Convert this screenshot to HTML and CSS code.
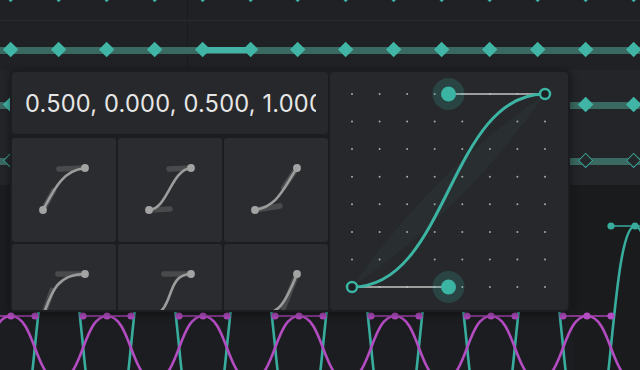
FILE: index.html
```html
<!DOCTYPE html>
<html>
<head>
<meta charset="utf-8">
<link rel="stylesheet" href="styles.css">
</head>
<body>
<div class="app">
  <div class="area area-top">
    <div class="row row-a">
      <div class="lane">
        <span class="slot"><i class="key"></i></span><span class="slot"><i class="key"></i></span><span class="slot"><i class="key"></i></span><span class="slot"><i class="key"></i></span><span class="slot"><i class="key"></i></span><span class="slot"><i class="key"></i></span><span class="slot"><i class="key"></i></span><span class="slot"><i class="key"></i></span><span class="slot"><i class="key"></i></span><span class="slot"><i class="key"></i></span><span class="slot"><i class="key"></i></span><span class="slot"><i class="key"></i></span><span class="slot"><i class="key"></i></span><span class="slot"><i class="key"></i></span><span class="slot"><i class="key"></i></span>
      </div>
    </div>
    <div class="row row-b">
      <div class="lane lane-track lane-active">
        <span class="slot"><i class="key"></i></span><span class="slot"><i class="key"></i></span><span class="slot"><i class="key"></i></span><span class="slot"><i class="key"></i></span><span class="slot"><i class="key"></i></span><span class="slot"><i class="key"></i></span><span class="slot"><i class="key"></i></span><span class="slot"><i class="key"></i></span><span class="slot"><i class="key"></i></span><span class="slot"><i class="key"></i></span><span class="slot"><i class="key"></i></span><span class="slot"><i class="key"></i></span><span class="slot"><i class="key"></i></span><span class="slot"><i class="key"></i></span><span class="slot"><i class="key"></i></span>
      </div>
    </div>
  </div>
  <div class="area area-mid">
    <div class="row row-c">
      <div class="lane lane-track">
        <span class="slot"><i class="key"></i></span><span class="slot"><i class="key"></i></span><span class="slot"><i class="key"></i></span><span class="slot"><i class="key"></i></span><span class="slot"><i class="key"></i></span><span class="slot"><i class="key"></i></span><span class="slot"><i class="key"></i></span><span class="slot"><i class="key"></i></span><span class="slot"><i class="key"></i></span><span class="slot"><i class="key"></i></span><span class="slot"><i class="key"></i></span><span class="slot"><i class="key"></i></span><span class="slot"><i class="key"></i></span><span class="slot"><i class="key"></i></span><span class="slot"><i class="key"></i></span>
      </div>
    </div>
    <div class="row row-d">
      <div class="lane lane-track">
        <span class="slot"><i class="key hollow"></i></span><span class="slot"><i class="key hollow"></i></span><span class="slot"><i class="key hollow"></i></span><span class="slot"><i class="key hollow"></i></span><span class="slot"><i class="key hollow"></i></span><span class="slot"><i class="key hollow"></i></span><span class="slot"><i class="key hollow"></i></span><span class="slot"><i class="key hollow"></i></span><span class="slot"><i class="key hollow"></i></span><span class="slot"><i class="key hollow"></i></span><span class="slot"><i class="key hollow"></i></span><span class="slot"><i class="key hollow"></i></span><span class="slot"><i class="key hollow"></i></span><span class="slot"><i class="key hollow"></i></span><span class="slot"><i class="key hollow"></i></span>
      </div>
    </div>
  </div>
  <div class="graph">
    <svg class="waves" width="640" height="185" viewBox="0 0 640 185">
      <path class="teal" d="M-85,281 C-61,281 -61,41 -37,41 S-13,281 11,281 S35,41 59,41 S83,281 107,281 S131,41 155,41 S179,281 203,281 S227,41 251,41 S275,281 299,281 S323,41 347,41 S371,281 395,281 S419,41 443,41 S467,281 491,281 S515,41 539,41 S563,281 587,281 S611,41 635,41 S659,281 683,281"/>
      <path class="magenta" d="M-85,131 C-61,131 -61,195 -37,195 S-13,131 11,131 S35,195 59,195 S83,131 107,131 S131,195 155,195 S179,131 203,131 S227,195 251,195 S275,131 299,131 S323,195 347,195 S371,131 395,131 S419,195 443,195 S467,131 491,131 S515,195 539,195 S563,131 587,131 S611,195 635,195 S659,131 683,131"/>
      <g class="mhandles">
        <line x1="-13" y1="131" x2="35" y2="131"/>
        <line x1="83" y1="131" x2="131" y2="131"/>
        <line x1="179" y1="131" x2="227" y2="131"/>
        <line x1="275" y1="131" x2="323" y2="131"/>
        <line x1="371" y1="131" x2="419" y2="131"/>
        <line x1="467" y1="131" x2="515" y2="131"/>
        <line x1="563" y1="131" x2="611" y2="131"/>
      </g>
      <g class="mdots">
        <circle cx="11" cy="131" r="3.6"/><circle cx="35" cy="131" r="3.6"/>
        <circle cx="83" cy="131" r="3.6"/><circle cx="107" cy="131" r="3.6"/><circle cx="131" cy="131" r="3.6"/>
        <circle cx="179" cy="131" r="3.6"/><circle cx="203" cy="131" r="3.6"/><circle cx="227" cy="131" r="3.6"/>
        <circle cx="275" cy="131" r="3.6"/><circle cx="299" cy="131" r="3.6"/><circle cx="323" cy="131" r="3.6"/>
        <circle cx="371" cy="131" r="3.6"/><circle cx="395" cy="131" r="3.6"/><circle cx="419" cy="131" r="3.6"/>
        <circle cx="467" cy="131" r="3.6"/><circle cx="491" cy="131" r="3.6"/><circle cx="515" cy="131" r="3.6"/>
        <circle cx="563" cy="131" r="3.6"/><circle cx="587" cy="131" r="3.6"/><circle cx="611" cy="131" r="3.6"/>
      </g>
      <g class="thandles">
        <line x1="611" y1="41" x2="659" y2="41"/>
      </g>
      <g class="tdots">
        <circle cx="611" cy="41" r="3.6"/><circle cx="635" cy="41" r="3.6"/>
      </g>
    </svg>
  </div>
</div>

<div class="popover">
  <div class="left-col">
    <div class="value-field"><div class="value-text">0.500, 0.000, 0.500, 1.000</div></div>
    <div class="presets">
      <div class="preset">
        <svg viewBox="0 0 104 104" width="104" height="104">
          <line class="h" x1="31" y1="72" x2="41.5" y2="52.7"/><line class="h" x1="73" y1="30" x2="47" y2="31"/>
          <path class="c" d="M31,72 C41.5,52.7 49.9,32.5 73,30"/>
          <circle class="p" cx="31" cy="72" r="3.9"/><circle class="p" cx="73" cy="30" r="3.9"/>
        </svg>
      </div>
      <div class="preset">
        <svg viewBox="0 0 104 104" width="104" height="104">
          <line class="h" x1="31" y1="72" x2="52" y2="71"/><line class="h" x1="73" y1="30" x2="51" y2="31"/>
          <path class="c" d="M31,72 C50.1,70.7 52.6,31.9 73,30"/>
          <circle class="p" cx="31" cy="72" r="3.9"/><circle class="p" cx="73" cy="30" r="3.9"/>
        </svg>
      </div>
      <div class="preset">
        <svg viewBox="0 0 104 104" width="104" height="104">
          <line class="h" x1="31" y1="72" x2="56" y2="68"/><line class="h" x1="73" y1="30" x2="59.6" y2="49.7"/>
          <path class="c" d="M31,72 C54.1,68.4 59.6,49.7 73,30"/>
          <circle class="p" cx="31" cy="72" r="3.9"/><circle class="p" cx="73" cy="30" r="3.9"/>
        </svg>
      </div>
      <div class="preset">
        <svg viewBox="0 0 104 104" width="104" height="104">
          <line class="h" x1="31" y1="72" x2="40" y2="46.4"/><line class="h" x1="73" y1="30" x2="45.9" y2="30"/>
          <path class="c" d="M31,72 C40,46.4 45.9,30 73,30"/>
          <circle class="p" cx="31" cy="72" r="3.9"/><circle class="p" cx="73" cy="30" r="3.9"/>
        </svg>
      </div>
      <div class="preset">
        <svg viewBox="0 0 104 104" width="104" height="104">
          <line class="h" x1="31" y1="72" x2="58.1" y2="70.1"/><line class="h" x1="73" y1="30" x2="45.9" y2="30"/>
          <path class="c" d="M31,72 C58.1,70.1 45.9,30 73,30"/>
          <circle class="p" cx="31" cy="72" r="3.9"/><circle class="p" cx="73" cy="30" r="3.9"/>
        </svg>
      </div>
      <div class="preset">
        <svg viewBox="0 0 104 104" width="104" height="104">
          <line class="h" x1="31" y1="72" x2="54.1" y2="69.7"/><line class="h" x1="73" y1="30" x2="59.4" y2="64"/>
          <path class="c" d="M31,72 C54.1,69.7 59.4,64 73,30"/>
          <circle class="p" cx="31" cy="72" r="3.9"/><circle class="p" cx="73" cy="30" r="3.9"/>
        </svg>
      </div>
    </div>
  </div>
  <div class="curve-panel">
    <svg viewBox="0 0 238 238" width="238" height="238">
      <g class="grid-dots">
        <circle cx="22" cy="22" r="1"/><circle cx="49.6" cy="22" r="1"/><circle cx="77.1" cy="22" r="1"/><circle cx="104.7" cy="22" r="1"/><circle cx="132.3" cy="22" r="1"/><circle cx="159.9" cy="22" r="1"/><circle cx="187.4" cy="22" r="1"/><circle cx="215" cy="22" r="1"/>
        <circle cx="22" cy="49.6" r="1"/><circle cx="49.6" cy="49.6" r="1"/><circle cx="77.1" cy="49.6" r="1"/><circle cx="104.7" cy="49.6" r="1"/><circle cx="132.3" cy="49.6" r="1"/><circle cx="159.9" cy="49.6" r="1"/><circle cx="187.4" cy="49.6" r="1"/><circle cx="215" cy="49.6" r="1"/>
        <circle cx="22" cy="77.1" r="1"/><circle cx="49.6" cy="77.1" r="1"/><circle cx="77.1" cy="77.1" r="1"/><circle cx="104.7" cy="77.1" r="1"/><circle cx="132.3" cy="77.1" r="1"/><circle cx="159.9" cy="77.1" r="1"/><circle cx="187.4" cy="77.1" r="1"/><circle cx="215" cy="77.1" r="1"/>
        <circle cx="22" cy="104.7" r="1"/><circle cx="49.6" cy="104.7" r="1"/><circle cx="77.1" cy="104.7" r="1"/><circle cx="104.7" cy="104.7" r="1"/><circle cx="132.3" cy="104.7" r="1"/><circle cx="159.9" cy="104.7" r="1"/><circle cx="187.4" cy="104.7" r="1"/><circle cx="215" cy="104.7" r="1"/>
        <circle cx="22" cy="132.3" r="1"/><circle cx="49.6" cy="132.3" r="1"/><circle cx="77.1" cy="132.3" r="1"/><circle cx="104.7" cy="132.3" r="1"/><circle cx="132.3" cy="132.3" r="1"/><circle cx="159.9" cy="132.3" r="1"/><circle cx="187.4" cy="132.3" r="1"/><circle cx="215" cy="132.3" r="1"/>
        <circle cx="22" cy="159.9" r="1"/><circle cx="49.6" cy="159.9" r="1"/><circle cx="77.1" cy="159.9" r="1"/><circle cx="104.7" cy="159.9" r="1"/><circle cx="132.3" cy="159.9" r="1"/><circle cx="159.9" cy="159.9" r="1"/><circle cx="187.4" cy="159.9" r="1"/><circle cx="215" cy="159.9" r="1"/>
        <circle cx="22" cy="187.4" r="1"/><circle cx="49.6" cy="187.4" r="1"/><circle cx="77.1" cy="187.4" r="1"/><circle cx="104.7" cy="187.4" r="1"/><circle cx="132.3" cy="187.4" r="1"/><circle cx="159.9" cy="187.4" r="1"/><circle cx="187.4" cy="187.4" r="1"/><circle cx="215" cy="187.4" r="1"/>
        <circle cx="22" cy="215" r="1"/><circle cx="49.6" cy="215" r="1"/><circle cx="77.1" cy="215" r="1"/><circle cx="104.7" cy="215" r="1"/><circle cx="132.3" cy="215" r="1"/><circle cx="159.9" cy="215" r="1"/><circle cx="187.4" cy="215" r="1"/><circle cx="215" cy="215" r="1"/>
      </g>
      <path class="band" d="M22,215 Q101,101 215,22 Q136,136 22,215 Z"/>
      <line class="hline" x1="22" y1="215" x2="118.5" y2="215"/>
      <line class="hline" x1="215" y1="22" x2="118.5" y2="22"/>
      <path class="curve" d="M22,215 C118.5,215 118.5,22 215,22"/>
      <circle class="halo" cx="118.5" cy="22" r="16"/>
      <circle class="halo" cx="118.5" cy="215" r="16"/>
      <circle class="ctrl" cx="118.5" cy="22" r="7.5"/>
      <circle class="ctrl" cx="118.5" cy="215" r="7.5"/>
      <circle class="end" cx="22" cy="215" r="5"/>
      <circle class="end" cx="215" cy="22" r="5"/>
    </svg>
  </div>
</div>
</body>
</html>
```

FILE: styles.css
```css
html, body {
  margin: 0;
  padding: 0;
  width: 640px;
  height: 370px;
  overflow: hidden;
  background: #1f2124;
  font-family: "Inter", "Noto Sans", sans-serif;
}

.app {
  width: 640px;
  height: 370px;
  display: flex;
  flex-direction: column;
  overflow: hidden;
}

.area-top {
  height: 70px;
  background:
    linear-gradient(to right, transparent 187px, #1a1b1e 187px, #1a1b1e 188px, transparent 188px),
    #1f2124;
}

.area-mid {
  height: 115px;
  background: #232529;
}

.row {
  overflow: hidden;
}

.row-a {
  height: 20px;
  border-bottom: 1px solid #292b2f;
}

.row-a .lane {
  margin-top: -13px;
}

.row-b {
  height: 49px;
  padding-top: 21px;
  box-sizing: border-box;
}

.row-c {
  height: 60px;
  padding-top: 27px;
  box-sizing: border-box;
}

.row-d {
  height: 55px;
  padding-top: 23px;
  box-sizing: border-box;
}

.lane {
  display: flex;
  height: 16px;
  margin-left: -13.25px;
  width: 720px;
}

.lane-track {
  background: linear-gradient(#3a6961, #3a6961) 0 50% / 100% 7px no-repeat;
}

.lane-active {
  background:
    linear-gradient(#44b4a6, #44b4a6) 216px 50% / 48px 6px no-repeat,
    linear-gradient(#3a6961, #3a6961) 0 50% / 100% 7px no-repeat;
}

.slot {
  flex: 0 0 47.9px;
  height: 16px;
  display: flex;
  align-items: center;
  justify-content: center;
}

.key {
  display: block;
  width: 11.3px;
  height: 11.3px;
  background: #40b4a5;
  transform: rotate(45deg);
  box-sizing: border-box;
}

.key.hollow {
  background: #25282b;
  border: 1.6px solid #3aa596;
}

.graph {
  height: 185px;
  background:
    linear-gradient(to right, #1c1d20 0, #1c1d20 573px, #1a1b1d 573px);
}

.waves {
  display: block;
}

.waves .teal {
  fill: none;
  stroke: #38ad9e;
  stroke-width: 2.6;
}

.waves .magenta {
  fill: none;
  stroke: #b24cc0;
  stroke-width: 2.6;
}

.mhandles line {
  stroke: #a845b6;
  stroke-width: 1.5;
}

.mdots circle {
  fill: #b24cc0;
}

.thandles line {
  stroke: #38ad9e;
  stroke-width: 1.5;
}

.tdots circle {
  fill: #38ad9e;
}

/* popover */
.popover {
  position: absolute;
  left: 10px;
  top: 70px;
  width: 560px;
  height: 242px;
  box-sizing: border-box;
  padding: 2px;
  background: #1c1d20;
  border-radius: 5px;
  box-shadow: 0 2px 8px rgba(0, 0, 0, 0.45);
  display: flex;
  gap: 2px;
  overflow: hidden;
}

.left-col {
  width: 316px;
  display: flex;
  flex-direction: column;
  gap: 4px;
  overflow: hidden;
}

.value-field {
  height: 62px;
  flex: 0 0 62px;
  background: #26282b;
  border-radius: 4px;
  padding: 0 12px 0 13px;
  box-sizing: border-box;
}

.value-text {
  color: #e6e6e6;
  font-family: "Inter", "Noto Sans", sans-serif;
  font-size: 23.6px;
  letter-spacing: 0.2px;
  line-height: 64px;
  white-space: nowrap;
  overflow: hidden;
}

.presets {
  display: grid;
  grid-template-columns: repeat(3, 104px);
  grid-auto-rows: 104px;
  gap: 2px;
}

.preset {
  background: #2a2c2f;
  border-radius: 3px;
  overflow: hidden;
}

.preset svg {
  display: block;
}

.preset .h {
  stroke: #484a4c;
  stroke-width: 5.5;
  stroke-linecap: round;
}

.preset .c {
  fill: none;
  stroke: #9c9c9c;
  stroke-width: 2.6;
  stroke-linecap: round;
}

.preset .p {
  fill: #a3a3a3;
}

.curve-panel {
  width: 238px;
  height: 238px;
  background: #26282b;
  border-radius: 4px;
  overflow: hidden;
}

.curve-panel svg {
  display: block;
}

.grid-dots circle {
  fill: #a8a8a8;
}

.band {
  fill: rgba(110, 170, 160, 0.06);
}

.hline {
  stroke: #c4c4c4;
  stroke-width: 1.3;
}

.curve {
  fill: none;
  stroke: #3cb4a4;
  stroke-width: 3;
  stroke-linecap: round;
}

.halo {
  fill: rgba(60, 180, 164, 0.2);
}

.ctrl {
  fill: #3cb4a4;
}

.end {
  fill: #1d1f22;
  stroke: #3cb4a4;
  stroke-width: 2.5;
}
```
